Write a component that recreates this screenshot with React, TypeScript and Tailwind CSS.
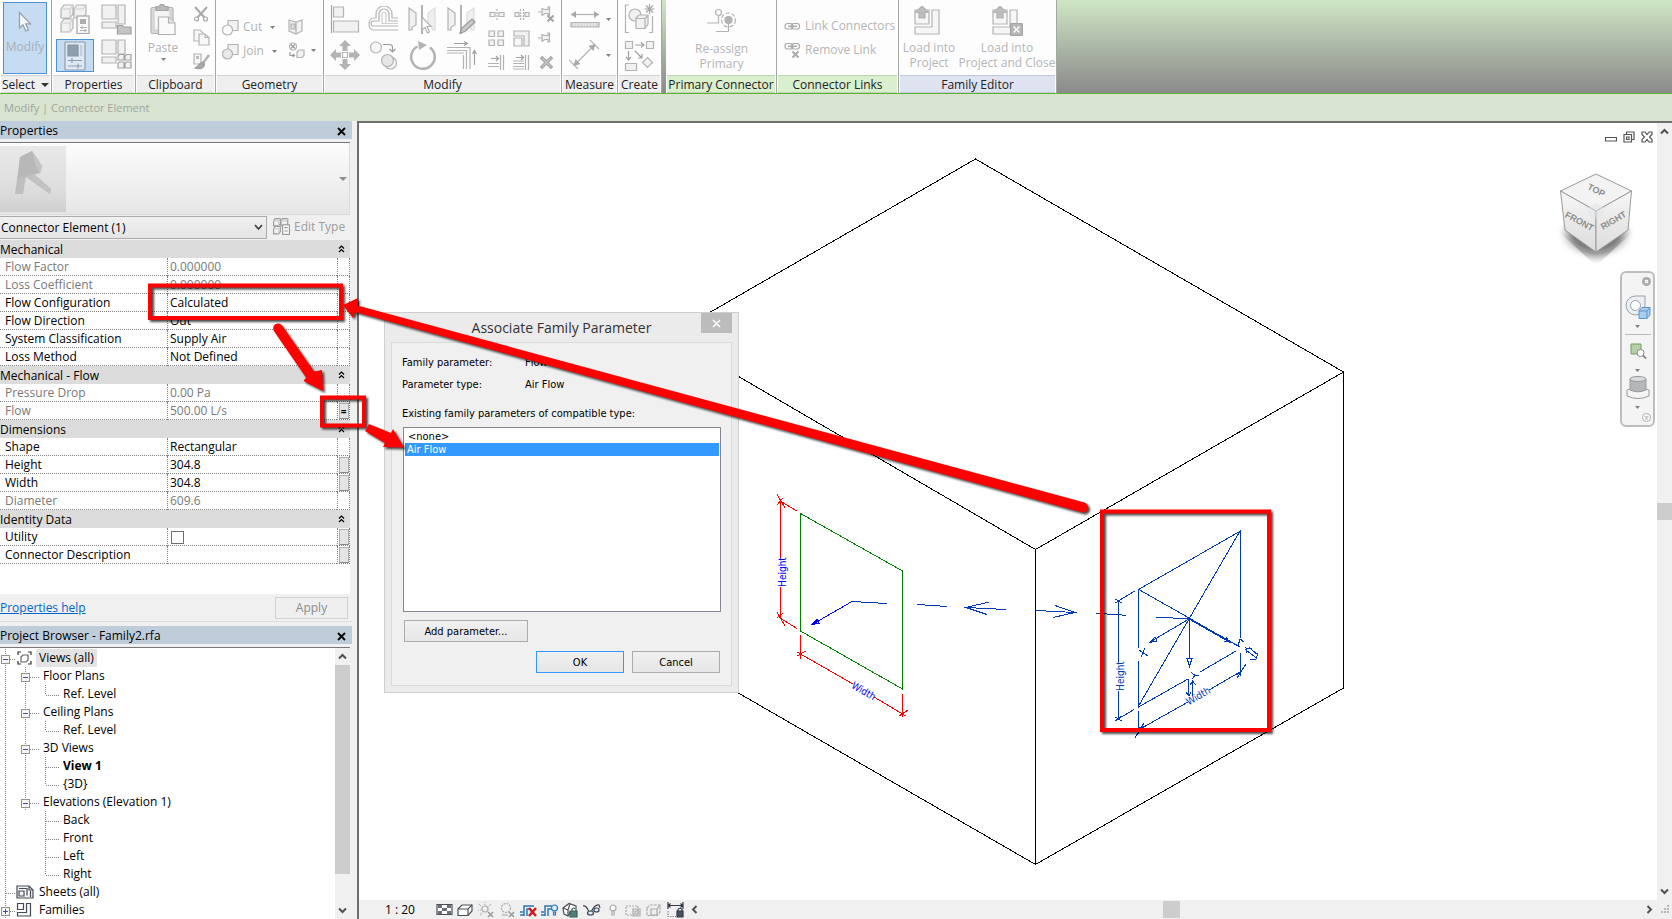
import React from "react";
import type { ReactNode } from "react";

/* ---------- shared drawing helpers ---------- */

type ArtProps = { w: number; h: number; children: ReactNode; stroke?: string; fill?: string };

function Art({ w, h, children, stroke = "#b3b3b3", fill = "#f1f1f1" }: ArtProps) {
  return (
    <svg
      aria-hidden="true"
      className="block shrink-0"
      width={w}
      height={h}
      viewBox={`0 0 ${w} ${h}`}
      fill={fill}
      stroke={stroke}
      strokeWidth="1.2"
    >
      {children}
    </svg>
  );
}

function Caret({ color = "#808080", size = 5 }: { color?: string; size?: number }) {
  return (
    <svg aria-hidden="true" className="block shrink-0" width={size} height={size > 5 ? 4 : 3} viewBox="0 0 6 3" preserveAspectRatio="none">
      <path d="M0 0h6L3 3z" fill={color} />
    </svg>
  );
}

type IconButtonProps = { label: string; className?: string; children: ReactNode };

function IconButton({ label, className = "", children }: IconButtonProps) {
  return (
    <button type="button" aria-label={label} title={label} className={`flex items-center justify-center ${className}`}>
      {children}
    </button>
  );
}

/* ---------- ribbon icons ---------- */

const CursorIcon = () => (
  <Art w={14} h={22} fill="#f4f8fc" stroke="#98a0a8">
    <path d="M1.500 1.500v15.500l3.500-3.300 2.700 6.300 2.600-1.100-2.600-6.100h4.800z" />
  </Art>
);

const Cubes = () => (
  <>
    <path d="M1 5l3-4h9v9l-3 4H1zM14 5l3-4h9v9l-3 4h-9zM1 19l3-4h9v9l-3 4H1z" />
    <path d="M1 5h9l3-4M10 5v9M14 5h9l3-4M1 19h9l3-4M10 19v9" fill="none" stroke="#cfcfcf" />
  </>
);

const TypePropertiesIcon = () => (
  <Art w={30} h={30}>
    <Cubes />
    <rect x="17" y="12" width="12" height="17.500" fill="#fafafa" stroke="#a6a6a6" />
    <rect x="20" y="15" width="6" height="5" fill="#aeaeae" stroke="none" />
    <path d="M20 23.500h7M20 26.500h7M22 22v3M25 25v3" fill="none" />
  </Art>
);

const FamilyCategoryIcon = () => (
  <Art w={31} h={31}>
    <path d="M1 1h14v14H1zM17 1h7v19h-7zM1 18h14v6H1z" />
    <path d="M16.500 21.500h5l1 1.500h7.500v7h-13.500z" fill="#c4c4c4" stroke="#9f9f9f" />
  </Art>
);

const PropertiesIcon = () => (
  <Art w={22} h={30} stroke="#8d9bab" fill="#dfe9f3">
    <rect x="1" y="1" width="20" height="28" rx="1" />
    <path d="M4 4h10v11H4z" fill="#8f9ead" stroke="#8494a5" />
    <path d="M16 4h2.500v11H16z" fill="#c3d0dc" stroke="none" />
    <path d="M4 19.500h14M4 25h14M8 17v5M14 22.500v5" fill="none" />
  </Art>
);

const FamilyTypesIcon = () => (
  <Art w={31} h={31}>
    <path d="M1 1h14v14H1zM17 1h7v14h-7zM1 18h14v6H1z" />
    <path d="M17 17l1.500-1.500h4.500v5.500h-6zM24 17l1.500-1.500h4.500v5.500h-6zM17 24.500l1.500-1.500h4.500v6h-6zM24 24.500l1.500-1.500h4.500v6h-6z" stroke="#a3a3a3" />
  </Art>
);

const PasteIcon = () => (
  <Art w={27} h={32}>
    <rect x="1" y="3.500" width="22" height="26" rx="1.500" fill="#d9d9d9" stroke="#b5b5b5" />
    <path d="M4 6h16v20H4z" fill="#f4f4f4" stroke="#cfcfcf" />
    <path d="M6 2.500h3l1.500-2h3l1.500 2h3v4H6z" fill="#b9b9b9" stroke="#a5a5a5" />
    <path d="M8.500 13h10l6.500 6v11.500H8.500z" fill="#fafafa" stroke="#b0b0b0" />
    <path d="M18.500 13v6h6.500" fill="#e3e3e3" />
  </Art>
);

const ScissorsIcon = () => (
  <Art w={16} h={16} fill="none" stroke="#a8a8a8">
    <path d="M2 1l9.500 10.500M14 1L4.500 11.500" strokeWidth="2" />
    <circle cx="3.500" cy="13" r="2" />
    <circle cx="12.500" cy="13" r="2" />
  </Art>
);

const CopyIcon = () => (
  <Art w={17} h={17} fill="#f7f7f7">
    <path d="M1 1h6l3 3v8H1z" />
    <path d="M6 5h6l4 3.500V16H6z" />
    <path d="M12 5v3.500h4" fill="none" />
  </Art>
);

const MatchIcon = () => (
  <Art w={17} h={17}>
    <path d="M1 1h7v10H1z" fill="#f7f7f7" />
    <path d="M3 3h3v3H3z" fill="#bbb" stroke="none" />
    <path d="M16 2l-6 8" strokeWidth="2.500" />
    <path d="M10 9c-4 0-3 4-8 6 4 1.500 9 1 9.500-4z" fill="#a8a8a8" stroke="#9c9c9c" />
  </Art>
);

const CutGeomIcon = () => (
  <Art w={17} h={17}>
    <path d="M6 1.500h10v10H6z" />
    <circle cx="5.500" cy="11" r="5" fill="#fff" />
  </Art>
);

const JoinGeomIcon = () => (
  <Art w={17} h={17}>
    <path d="M6 1.500h10v10H6z" />
    <circle cx="5.500" cy="11" r="5" fill="#e9e9e9" />
  </Art>
);

const CopeIcon = () => (
  <Art w={15} h={17}>
    <path d="M1 2l7 2 6-2v11l-6 3-7-3z" />
    <path d="M8 4v12M3 6h4v5H3z" fill="#ddd" />
  </Art>
);

const SplitFaceIcon = () => (
  <Art w={17} h={17}>
    <circle cx="5" cy="4.500" r="3.500" fill="#fff" />
    <path d="M3 2.500l4 4M7 2.500l-4 4M2 10v3.500h4M4.500 12l2 1.500-2 1.500" fill="none" stroke="#999" />
    <path d="M9 10l2-2h5v5.500l-2 2H9z" />
  </Art>
);

const AlignIcon = () => (
  <Art w={30} h={30}>
    <path d="M1.500 1v28" stroke="#a5a5a5" />
    <path d="M3.500 3h10v10h-10zM3.500 17h25v11h-25z" />
  </Art>
);

const OffsetIcon = () => (
  <Art w={31} h={27} fill="none">
    <path d="M30 20H5.500a2.500 2.500 0 010-5H11V8a5 5 0 0110 0v7h9" />
    <path d="M30 24H5.500C-.5 24-.5 12 6 12h2V8a8 8 0 0116 0v4h6" stroke="#b8b8b8" />
    <path d="M30 17.500H14V8.500a2 2 0 014 0v9" stroke="#d0d0d0" />
  </Art>
);

const MirrorPickIcon = () => (
  <Art w={29} h={29}>
    <path d="M1 3l7 5v12l-4 2v3H1z" />
    <path d="M27 3l-7 5v12l4 2v3h3z" fill="#efefef" stroke="#dcdcdc" />
    <path d="M14 0v29" strokeWidth="2" />
    <path d="M14 12v13l3-2.500 2.500 5.500 2-1-2.500-5.500h4z" fill="#fff" />
  </Art>
);

const MirrorDrawIcon = () => (
  <Art w={29} h={29}>
    <path d="M1 3l7 5v12l-4 2v3H1z" />
    <path d="M27 3l-7 5v12l4 2v3h3z" fill="#efefef" stroke="#dcdcdc" />
    <path d="M14 0v29" strokeWidth="2" />
    <path d="M13 28l2-5 10-9 3 3-10 9.500z" fill="#c9c9c9" stroke="#999" />
  </Art>
);

const MoveIcon = () => (
  <Art w={30} h={30} fill="#b3b3b3" stroke="none">
    <path d="M15 0l6 6h-3.500v5h-5V6H9zM15 30l-6-6h3.500v-5h5v5H21zM0 15l6-6v3.500h5v5H6V21zM30 15l-6 6v-3.500h-5v-5h5V9z" />
    <path d="M12.500 12.500h5v5h-5z" fill="#fff" stroke="#b3b3b3" />
  </Art>
);

const CopyMoveIcon = () => (
  <Art w={29} h={29} fill="#f6f6f6">
    <circle cx="7" cy="6.500" r="5.500" />
    <circle cx="21.500" cy="22" r="6" />
    <circle cx="18.500" cy="19.500" r="6" fill="#e7e7e7" />
    <path d="M14 3.500h6.500q3 0 3 3V10M20.500 8l3 3 3-3" fill="none" stroke="#9a9a9a" />
  </Art>
);

const RotateIcon = () => (
  <Art w={28} h={30} fill="none">
    <path d="M8.500 6.500A11.800 11.800 0 1021 7.500" strokeWidth="2.500" />
    <path d="M9 1l9 4-8 5z" fill="#b3b3b3" stroke="none" />
  </Art>
);

const TrimIcon = () => (
  <Art w={30} h={29} fill="none">
    <path d="M7 2.500h13M17 .500l3.500 2-3.500 2" stroke="#a0a0a0" />
    <path d="M0 6.500h23V28M0 9.500h19.500V28M0 12h17M16.500 14v14" />
    <path d="M27.500 24V10M25.500 13l2-3.500 2 3.500" stroke="#a0a0a0" />
  </Art>
);

const SplitIcon = () => (
  <Art w={16} h={13}>
    <path d="M1 4.500h5v4H1zM10 4.500h5v4h-5z" />
    <path d="M8 1v11" strokeDasharray="2 1" />
  </Art>
);

const SplitGapIcon = () => (
  <Art w={16} h={13}>
    <path d="M1 4.500h4v4H1zM11 4.500h4v4h-4z" />
    <path d="M6.500 1v11M9.500 1v11" strokeDasharray="2 1" />
  </Art>
);

const UnpinIcon = () => (
  <Art w={17} h={17}>
    <path d="M0 6h4M4 2.500v7l3-2h3v2.500h1.500V1H10v2.500H7z" />
    <path d="M9.500 9.500l6 6M15.500 9.500l-6 6" stroke="#a0a0a0" strokeWidth="1.800" />
  </Art>
);

const PinIcon = () => (
  <Art w={17} h={17}>
    <path d="M0 8h4M4 4.500v7l3-2h3v2.500h1.500V3H10v2.500H7z" />
  </Art>
);

const ArrayIcon = () => (
  <Art w={17} h={17}>
    <path d="M1 1h5.500v5.500H1zM10 1h5.500v5.500H10zM1 10h5.500v5.500H1zM10 10h5.500v5.500H10z" />
  </Art>
);

const ScaleIcon = () => (
  <Art w={17} h={17}>
    <path d="M1 1h15v15h-5V6H1z" />
    <path d="M1 8h8v8H1z" fill="#f7f7f7" />
  </Art>
);

const TrimOneIcon = () => (
  <Art w={17} h={17} fill="none">
    <path d="M12.500 1v15M15.500 1v15M0 9.500h11M0 12.500h11" />
    <path d="M3 4.500h7M8 2l2.500 2.500L8 7" stroke="#a0a0a0" />
  </Art>
);

const TrimManyIcon = () => (
  <Art w={17} h={17} fill="none">
    <path d="M12.500 1v15M15.500 1v15M0 7h11M0 9.500h11M0 12.500h11M0 15h11" />
    <path d="M3 3.500h7M8 1l2.500 2.500L8 6" stroke="#a0a0a0" />
  </Art>
);

const DeleteIcon = () => (
  <Art w={15} h={15} stroke="#a4a4a4">
    <path d="M2 2l11 11M13 2L2 13" strokeWidth="3.500" />
    <path d="M3 3l9 9M12 3l-9 9" stroke="#c6c6c6" />
  </Art>
);

const MeasureIcon = () => (
  <Art w={30} h={18}>
    <path d="M1 4.500h28" />
    <path d="M1 4.500L6 1v7zM29 4.500L24 1v7z" fill="#a8a8a8" stroke="none" />
    <path d="M1 12.500h28v4.500H1z" fill="#d4d4d4" />
    <path d="M4 13v3M7 13v3M10 13v3M13 13v3M16 13v3M19 13v3M22 13v3M25 13v3" stroke="#f4f4f4" strokeWidth="1" />
  </Art>
);

const AlignedDimIcon = () => (
  <Art w={31} h={30}>
    <path d="M6 24.500L25 5.500M0 20l9 9M21 0l9 9" fill="none" />
    <path d="M4.500 26l2-7 5 5zM26.500 4l-2 7-5-5z" fill="#a8a8a8" stroke="none" />
  </Art>
);

const GroupIcon = () => (
  <Art w={31} h={30}>
    <path d="M5 1H1.500v27.500H5M25 28.500h3.500V12" fill="none" />
    <circle cx="11" cy="11" r="6" />
    <path d="M12 14l3-3h9v9l-3 4.500h-9z" />
    <path d="M12 14.500h9l3-3M21 14.500v10" fill="none" />
    <path d="M25.500 0v10M20.500 5h10M22 1.500l7 7M29 1.500l-7 7" stroke="#a6a6a6" />
  </Art>
);

const SimilarIcon = () => (
  <Art w={31} h={31}>
    <path d="M1.500 1.500h7v7h-7zM22.500 1.500h7v7h-7zM1.500 23.500h11v7h-11zM23.500 17.500l5 5-5 5-5-5z" />
    <path d="M11 5h9M17 2.500L20 5l-3 2.500M4.500 11v9M2 17l2.500 3L7 17M11 11l7 7M18 14v4h-4" fill="none" stroke="#a0a0a0" />
  </Art>
);

const ReassignIcon = () => (
  <Art w={30} h={25} fill="none">
    <path d="M0 15h11.500V8M9 23.500h12.500V13" />
    <circle cx="11.500" cy="4.500" r="3" />
    <circle cx="21.500" cy="12" r="3.500" fill="#b3b3b3" />
    <circle cx="21.500" cy="12" r="7" strokeDasharray="4 2" />
  </Art>
);

const LinkIcon = () => (
  <Art w={17} h={9} fill="none" stroke="#ababab">
    <rect x="1" y="1.500" width="8" height="5.500" rx="2.500" />
    <rect x="7.500" y="1.500" width="8" height="5.500" rx="2.500" />
    <path d="M4 4.300h9" strokeWidth="1.500" />
  </Art>
);

const UnlinkIcon = () => (
  <Art w={17} h={17} fill="none" stroke="#ababab">
    <rect x="1" y="1.500" width="8" height="5.500" rx="2.500" />
    <rect x="7.500" y="1.500" width="8" height="5.500" rx="2.500" />
    <path d="M4 4.300h9" strokeWidth="1.500" />
    <path d="M8.500 9.500l6 6M14.500 9.500l-6 6" strokeWidth="2" />
  </Art>
);

const LoadIcon = () => (
  <Art w={31} h={30}>
    <path d="M1 4h14v14H1zM18 4h7v24H1v-7h17z" fill="#f6f6f6" />
    <path d="M8 0l6.500 6.500H11V12H5V6.500H1.500z" fill="#bdbdbd" />
  </Art>
);

const LoadCloseIcon = () => (
  <Art w={31} h={30}>
    <path d="M1 4h14v14H1zM18 4h7v24H1v-7h17z" fill="#f6f6f6" />
    <path d="M8 0l6.500 6.500H11V12H5V6.500H1.500z" fill="#bdbdbd" />
    <rect x="18.500" y="17.500" width="12" height="12" rx="1" fill="#b5b5b5" stroke="#a5a5a5" />
    <path d="M21.500 20.500l6 6M27.500 20.500l-6 6" stroke="#fff" strokeWidth="1.500" />
  </Art>
);

/* ---------- ribbon ---------- */

type PanelProps = { title: string; className: string; tone?: string; caret?: boolean; children: ReactNode };

function Panel({ title, className, tone = "bg-[#efefef] border-[#d2d2d2]", caret, children }: PanelProps) {
  return (
    <section aria-label={title} className={`flex shrink-0 flex-col border-r border-[#a4a8a2] bg-[#fdfdfd] pl-px ${className}`}>
      <div className="flex h-[75px]">{children}</div>
      <div className={`mr-px flex h-[18px] items-center justify-center border-y pt-px whitespace-nowrap ${caret ? "gap-1.5" : ""} ${tone}`}>
        <span>{title}</span>
        {caret && <Caret color="#333" size={8} />}
      </div>
    </section>
  );
}

function Ribbon() {
  return (
    <header className="flex h-[93px] shrink-0 bg-linear-to-b from-[#cfe6c4] to-[#8a8a8a] text-xs leading-4 text-[#222]">
      <Panel title="Select" caret className="w-13">
        <button type="button" className="mt-0.5 ml-0.5 flex h-[72px] w-11 flex-col items-center border border-[#4c92d4] bg-[#c5dcf2] pt-2 text-[#a7afb8]">
          <CursorIcon />
          <span className="mt-1.5">Modify</span>
        </button>
      </Panel>
      <Panel title="Properties" className="w-21">
        <div className="grid grid-cols-[38px_36px] grid-rows-[34px_36px] gap-x-1 pt-0.5 pl-[3px]">
          <IconButton label="Type Properties"><TypePropertiesIcon /></IconButton>
          <IconButton label="Family Category and Parameters"><FamilyCategoryIcon /></IconButton>
          <IconButton label="Properties" className="mt-[3px] border border-[#4c92d4] bg-[#c5dcf2]"><PropertiesIcon /></IconButton>
          <IconButton label="Family Types"><FamilyTypesIcon /></IconButton>
        </div>
      </Panel>
      <Panel title="Clipboard" className="w-20">
        <button type="button" className="ml-1.5 flex w-10 flex-col items-center pt-1 text-[#b2b2b2]">
          <PasteIcon />
          <span className="mt-1 mb-0.5">Paste</span>
          <Caret />
        </button>
        <div className="ml-2 flex flex-col justify-between py-1">
          <IconButton label="Cut" className="h-5 w-5"><ScissorsIcon /></IconButton>
          <IconButton label="Copy" className="h-5 w-5"><CopyIcon /></IconButton>
          <IconButton label="Match Type Properties" className="h-5 w-5"><MatchIcon /></IconButton>
        </div>
      </Panel>
      <Panel title="Geometry" className="w-27">
        <div className="flex w-16 flex-col gap-2 pt-[19px] pl-[5px] text-[#b2b2b2]">
          <button type="button" className="flex h-4 items-center gap-1"><CutGeomIcon />Cut<span className="pl-1"><Caret /></span></button>
          <button type="button" className="flex h-4 items-center gap-1"><JoinGeomIcon />Join<span className="pl-1"><Caret /></span></button>
        </div>
        <div className="flex flex-col items-start gap-2 pt-[18px] pl-[7px]">
          <IconButton label="Cope" className="h-4"><CopeIcon /></IconButton>
          <IconButton label="Split Face" className="h-4 gap-1.5"><SplitFaceIcon /><Caret /></IconButton>
        </div>
      </Panel>
      <Panel title="Modify" className="w-[238px]">
        <div className="grid grid-cols-[39px_39px_39px_39px] grid-rows-[36px_36px] pt-px">
          <IconButton label="Align"><AlignIcon /></IconButton>
          <IconButton label="Offset"><OffsetIcon /></IconButton>
          <IconButton label="Mirror - Pick Axis"><MirrorPickIcon /></IconButton>
          <IconButton label="Mirror - Draw Axis"><MirrorDrawIcon /></IconButton>
          <IconButton label="Move"><MoveIcon /></IconButton>
          <IconButton label="Copy"><CopyMoveIcon /></IconButton>
          <IconButton label="Rotate"><RotateIcon /></IconButton>
          <IconButton label="Trim/Extend to Corner"><TrimIcon /></IconButton>
        </div>
        <div className="grid grid-cols-[25px_25px_25px] grid-rows-[24px_24px_24px] pt-0.5 pl-[3px]">
          <IconButton label="Split Element"><SplitIcon /></IconButton>
          <IconButton label="Split with Gap"><SplitGapIcon /></IconButton>
          <IconButton label="Unpin"><UnpinIcon /></IconButton>
          <IconButton label="Array"><ArrayIcon /></IconButton>
          <IconButton label="Scale"><ScaleIcon /></IconButton>
          <IconButton label="Pin"><PinIcon /></IconButton>
          <IconButton label="Trim/Extend Single Element"><TrimOneIcon /></IconButton>
          <IconButton label="Trim/Extend Multiple Elements"><TrimManyIcon /></IconButton>
          <IconButton label="Delete"><DeleteIcon /></IconButton>
        </div>
      </Panel>
      <Panel title="Measure" className="w-14">
        <div className="grid grid-rows-[36px_36px] pt-px pl-1.5">
          <IconButton label="Measure" className="gap-1.5"><MeasureIcon /><Caret /></IconButton>
          <IconButton label="Aligned Dimension" className="gap-1.5"><AlignedDimIcon /><Caret /></IconButton>
        </div>
      </Panel>
      <Panel title="Create" className="w-11">
        <div className="grid grid-rows-[36px_36px] pt-px pl-[5px]">
          <IconButton label="Create Group"><GroupIcon /></IconButton>
          <IconButton label="Create Similar"><SimilarIcon /></IconButton>
        </div>
      </Panel>
      <Panel title="Primary Connector" tone="bg-[#d9efcd] border-[#bcd2b0]" className="ml-1 w-[111px]">
        <button type="button" className="flex w-full flex-col items-center pt-2 leading-[15px] text-[#b5b5b5]">
          <ReassignIcon />
          <span className="mt-2">Re-assign<br />Primary</span>
        </button>
      </Panel>
      <Panel title="Connector Links" tone="bg-[#d9efcd] border-[#bcd2b0]" className="w-[122px]">
        <div className="flex flex-col gap-2 pt-[18px] pl-1.5 text-[#b5b5b5]">
          <button type="button" className="flex h-4 items-center gap-1 whitespace-nowrap"><LinkIcon />Link Connectors</button>
          <button type="button" className="flex h-4 items-center gap-1 whitespace-nowrap"><UnlinkIcon />Remove Link</button>
        </div>
      </Panel>
      <Panel title="Family Editor" tone="bg-[#dfe2f1] border-[#c3c6d8]" className="w-[158px]">
        <button type="button" className="flex w-[58px] flex-col items-center pt-1.5 leading-[15px] whitespace-nowrap text-[#b5b5b5]">
          <LoadIcon />
          <span className="mt-1">Load into<br />Project</span>
        </button>
        <button type="button" className="flex flex-1 flex-col items-center pt-1.5 leading-[15px] whitespace-nowrap text-[#b5b5b5]">
          <LoadCloseIcon />
          <span className="mt-1">Load into<br />Project and Close</span>
        </button>
      </Panel>
    </header>
  );
}

/* ---------- properties palette ---------- */

function PaletteTitle({ children }: { children: ReactNode }) {
  return (
    <div className="mr-[5px] flex h-[18px] shrink-0 items-center justify-between bg-[#bfcddb] pt-0.5 pr-[5px]">
      <h2 className="whitespace-nowrap">{children}</h2>
      <IconButton label="Close" className="h-3 w-3">
        <svg aria-hidden="true" width="9" height="9" viewBox="0 0 9 9" stroke="#000" strokeWidth="1.800"><path d="M1 1l7 7M8 1L1 8" /></svg>
      </IconButton>
    </div>
  );
}

type Prop = { name: string; value?: string; dim?: boolean; assoc?: "none" | "empty" | "equals"; check?: boolean };
type Group = { title: string; rows: Prop[] };

const groups: Group[] = [
  {
    title: "Mechanical",
    rows: [
      { name: "Flow Factor", value: "0.000000", dim: true },
      { name: "Loss Coefficient", value: "0.000000", dim: true },
      { name: "Flow Configuration", value: "Calculated" },
      { name: "Flow Direction", value: "Out" },
      { name: "System Classification", value: "Supply Air" },
      { name: "Loss Method", value: "Not Defined" },
    ],
  },
  {
    title: "Mechanical - Flow",
    rows: [
      { name: "Pressure Drop", value: "0.00 Pa", dim: true },
      { name: "Flow", value: "500.00 L/s", dim: true, assoc: "equals" },
    ],
  },
  {
    title: "Dimensions",
    rows: [
      { name: "Shape", value: "Rectangular" },
      { name: "Height", value: "304.8", assoc: "empty" },
      { name: "Width", value: "304.8", assoc: "empty" },
      { name: "Diameter", value: "609.6", dim: true },
    ],
  },
  {
    title: "Identity Data",
    rows: [
      { name: "Utility", check: true, assoc: "empty" },
      { name: "Connector Description", assoc: "empty" },
    ],
  },
];

function PropertyRow({ row }: { row: Prop }) {
  const tone = row.dim ? "text-[#787878]" : "text-black";
  return (
    <tr className={`h-[18px] ${tone}`}>
      <th scope="row" className="border-b border-dotted border-[#808080] p-0 pl-[5px] text-left font-normal">
        {row.check ? <label htmlFor="utility">{row.name}</label> : row.name}
      </th>
      <td className="border-b border-l border-dotted border-[#808080] p-0 pl-0.5">
        {row.check ? (
          <input id="utility" type="checkbox" className="mt-0.5 ml-px block h-[13px] w-[13px] appearance-none border border-[#707070] bg-white" />
        ) : (
          row.value
        )}
      </td>
      <td className="border-x border-b border-dotted border-[#808080] p-0">
        {row.assoc && (
          <button
            type="button"
            aria-label={`Associate ${row.name}`}
            className="mx-auto flex h-4 w-2.5 items-center justify-center border border-[#adadad] border-b-[#8a8a8a] bg-[#e4e4e4] text-[10px] leading-[14px] font-bold text-black"
          >
            {row.assoc === "equals" ? "=" : ""}
          </button>
        )}
      </td>
    </tr>
  );
}

function PropertiesPalette() {
  return (
    <section aria-label="Properties" className="flex shrink-0 flex-col">
      <PaletteTitle>Properties</PaletteTitle>
      <div className="mt-[3px] mr-[7px] border-t border-[#777]">
        <div className="flex h-[72px] items-center justify-between border-r border-b border-[#dadada] bg-linear-to-b from-[#fcfcfc] to-[#e6e6e6] pr-0.5">
          <svg aria-hidden="true" className="block" width="66" height="66" viewBox="0 0 66 66">
            <defs>
              <linearGradient id="thumb" x1="0" y1="0" x2="0" y2="1">
                <stop offset="0" stopColor="#e9e9e9" />
                <stop offset="0.700" stopColor="#dcdcdc" />
                <stop offset="1" stopColor="#cfcfcf" />
              </linearGradient>
            </defs>
            <rect width="66" height="66" fill="url(#thumb)" />
            <path d="M20 11l12-6 10 15-2 7-6 1 17 15-1 5-24-17-3 17h-8z" fill="#bebebe" />
            <path d="M32 5l10 15-2 7-22 5 2-21z" fill="#b8b8b8" />
            <path d="M32 5l10 15-2 7-5-9z" fill="#c4c4c4" />
            <path d="M34 28l17 15-1 5-24-17z" fill="#c2c2c2" />
          </svg>
          <IconButton label="Change type" className="h-4 w-2"><Caret size={8} color="#909090" /></IconButton>
        </div>
        <div className="flex h-[25px] items-center">
          <div className="relative h-[23px] w-[267px] shrink-0">
            <select aria-label="Type filter" className="h-full w-full appearance-none border border-l-0 border-[#ababab] bg-linear-to-b from-[#f2f2f2] to-[#e3e3e3] pt-px pl-px">
              <option>Connector Element (1)</option>
            </select>
            <svg aria-hidden="true" className="pointer-events-none absolute top-2 right-1" width="9" height="7" viewBox="0 0 9 7" fill="none" stroke="#444" strokeWidth="1.800"><path d="M1 1l3.500 4L8 1" /></svg>
          </div>
          <button type="button" className="mb-0.5 ml-1.5 flex items-center gap-1 whitespace-nowrap text-[#9c9c9c]">
            <svg aria-hidden="true" width="17" height="17" viewBox="0 0 30 30" fill="#f1f1f1" stroke="#999" strokeWidth="2">
              <Cubes />
              <rect x="17" y="12" width="12" height="17" fill="#fafafa" stroke="#999" />
              <path d="M20 17h6M20 23h6" />
            </svg>
            Edit Type
          </button>
        </div>
      </div>
      <div className="mr-[7px] bg-white pb-[30px]">
        <table className="w-full table-fixed border-separate border-spacing-0 leading-4">
          <colgroup>
            <col />
            <col className="w-[170px]" />
            <col className="w-[13px]" />
          </colgroup>
          {groups.map((g) => (
            <tbody key={g.title}>
              <tr className="h-[18px] bg-[#dcdcdc]">
                <th scope="colgroup" colSpan={2} className="p-0 pt-px text-left font-normal">{g.title}</th>
                <td className="p-0">
                  <IconButton label={`Collapse ${g.title}`} className="-ml-1 h-4 w-4">
                    <svg aria-hidden="true" width="7" height="8" viewBox="0 0 7 8" fill="none" stroke="#000" strokeWidth="1.200"><path d="M1 3.500l2.500-2.500L6 3.500M1 7l2.500-2.500L6 7" /></svg>
                  </IconButton>
                </td>
              </tr>
              {g.rows.map((r) => <PropertyRow key={r.name} row={r} />)}
            </tbody>
          ))}
        </table>
      </div>
      <div className="mr-[5px] mb-1 flex h-7 items-center justify-between border-b border-[#dcdcdc] pr-1">
        <a href="#help" className="text-[#0066cc] underline">Properties help</a>
        <button type="button" className="h-[22px] w-[73px] border border-[#d0d0d0] bg-[#efefef] pt-px text-[#8c8c8c]">Apply</button>
      </div>
    </section>
  );
}

/* ---------- project browser ---------- */

type Guide = "" | "line" | "start" | "minus" | "plus" | "tee" | "end" | "stub";

function GuideCell({ kind, narrow }: { kind: Guide; narrow?: boolean }) {
  const full = kind === "line" || kind === "tee" || kind === "minus" || kind === "plus";
  return (
    <svg aria-hidden="true" className="block shrink-0" width={narrow ? 16 : 20} height="18" viewBox={narrow ? "0 0 16 18" : "0 0 20 18"} shapeRendering="crispEdges" fill="none" stroke="#808080" strokeDasharray="1 1">
      {full && <path d="M5.500 0V18" />}
      {kind === "end" && <path d="M5.500 0V10" />}
      {kind === "start" && <path d="M5.500 10V18" />}
      {kind !== "" && kind !== "line" && kind !== "start" && <path d="M5.500 10.500H20" />}
      {(kind === "minus" || kind === "plus") && (
        <g strokeDasharray="none">
          <rect x="1.500" y="6.500" width="8" height="8" fill="#f6f6f6" stroke="#919191" />
          <path d={kind === "plus" ? "M3 10.500h5M5.500 8v5" : "M3 10.500h5"} stroke="#3c50b4" />
        </g>
      )}
    </svg>
  );
}

const ViewsIcon = () => (
  <Art w={20} h={16} fill="none" stroke="#333">
    <path d="M2 5V2h3M12 2h3v3M2 11v3h3M12 14h3v-3" />
    <path d="M5 7l2-2h5v5l-2 2H5z" stroke="#666" />
  </Art>
);

const SheetsIcon = () => (
  <Art w={20} h={16} fill="#f4f4f4" stroke="#444b55">
    <path d="M1 2h12l4 4v8H1z" />
    <path d="M3 4.500h8v7M3 7h5v5H3zM13 2v4h4M14.500 7v6" fill="none" />
  </Art>
);

const FamiliesIcon = () => (
  <Art w={20} h={16} fill="#f8f8f8" stroke="#444b55">
    <path d="M1.500 1.500h6v6h-6zM10.500 1.500h4v12.500h-13v-3.500h9z" />
  </Art>
);

type Node = { label: string; guides: Guide[]; icon?: ReactNode; bold?: boolean; selected?: boolean };

const nodes: Node[] = [
  { label: "Views (all)", guides: ["minus"], icon: <ViewsIcon />, selected: true },
  { label: "Floor Plans", guides: ["line", "minus"] },
  { label: "Ref. Level", guides: ["line", "line", "end"] },
  { label: "Ceiling Plans", guides: ["line", "minus"] },
  { label: "Ref. Level", guides: ["line", "line", "end"] },
  { label: "3D Views", guides: ["line", "minus"] },
  { label: "View 1", guides: ["line", "line", "tee"], bold: true },
  { label: "{3D}", guides: ["line", "line", "end"] },
  { label: "Elevations (Elevation 1)", guides: ["line", "minus"] },
  { label: "Back", guides: ["line", "", "tee"] },
  { label: "Front", guides: ["line", "", "tee"] },
  { label: "Left", guides: ["line", "", "tee"] },
  { label: "Right", guides: ["line", "", "end"] },
  { label: "Sheets (all)", guides: ["tee"], icon: <SheetsIcon /> },
  { label: "Families", guides: ["plus"], icon: <FamiliesIcon /> },
];

function Chevron({ d }: { d: string }) {
  return (
    <svg aria-hidden="true" width="9" height="9" viewBox="0 0 9 9" fill="none" stroke="#505050" strokeWidth="2"><path d={d} /></svg>
  );
}

const UP = "M1 6.500L4.500 3 8 6.500";
const DOWN = "M1 2.500L4.500 6 8 2.500";
const LEFT = "M6.500 1L3 4.500 6.500 8";
const RIGHT = "M2.500 1L6 4.500 2.500 8";

function ProjectBrowser() {
  return (
    <section aria-label="Project Browser" className="flex min-h-0 flex-1 flex-col">
      <PaletteTitle>Project Browser - Family2.rfa</PaletteTitle>
      <div className="mt-[3px] mr-[7px] flex min-h-0 flex-1 border-t border-[#777] bg-white">
        <ul className="min-w-0 flex-1 overflow-hidden pt-px">
          {nodes.map((n, i) => (
            <li key={i} className="flex h-[18px] items-center">
              {n.guides.map((g, j) => <GuideCell key={j} kind={g} narrow={!!n.icon} />)}
              {n.icon}
              <span className={`px-[3px] leading-[18px] ${n.bold ? "font-bold" : ""} ${n.selected ? "bg-[#e3e3e3]" : ""}`}>{n.label}</span>
            </li>
          ))}
        </ul>
        <div className="flex w-[15px] flex-col bg-[#f0f0f0]">
          <IconButton label="Scroll up" className="h-[17px]"><Chevron d={UP} /></IconButton>
          <div className="flex-1"><div className="h-[88%] bg-[#cdcdcd]" /></div>
          <IconButton label="Scroll down" className="h-[17px]"><Chevron d={DOWN} /></IconButton>
        </div>
      </div>
    </section>
  );
}

/* ---------- model view ---------- */

function ModelDrawing() {
  return (
    <svg aria-label="3D view of the family" role="img" className="block h-full w-full font-['DejaVu_Sans_Condensed','DejaVu_Sans',sans-serif] text-[10px]">
      <g transform="translate(-359 -122)" fill="none" shapeRendering="crispEdges">
        <g stroke="#000">
          <path d="M975.500 158L669 335V652L1035.500 863.500 1343.500 687V371z" />
          <path d="M669 335L1035.500 548.500 1343.500 371M1035.500 548V863" />
        </g>
        <path d="M800.500 512.500L902.500 570V688L800.500 630z" stroke="#008000" />
        <g stroke="#f00">
          <path d="M780.500 498V557M780.500 586V618M780 500L797 510M780 617L797 627.500M777 493.500L785 507M777 504L783 497M777 611.500L785 625M777 617L783 612" />
          <path d="M800.500 634V658M902.500 693V716M800.500 653L853 683M874 696L902.500 713M797 655L806 650M797 651L804 655M899 711L906 715M899 715L908 709" />
        </g>
        <g stroke="#00f">
          <path d="M852 600.500L813 623M812 623.500L817 618.500 819 622.500z" />
        </g>
        <g stroke="#0039b8">
          <path d="M852 600.500L887 602.500M917 603.500L947 605.500M1006 608.500L966 606.500M989 601L966 606.500 987 613.500M1036 609.500L1075 611.500M1055 604.500L1075 611.500 1053 616.500" />
          <path d="M1138.500 647V588.500L1240.500 530V637M1138.500 660V706L1188 678M1200 671L1236 650M1240 530L1138 706M1138 588L1240 646" />
          <path d="M1156 616.500L1189 617.500M1189 618L1231 642M1224 640.500L1230 641 1226 636.500M1189 618L1150 641M1149.500 641.500L1155 636 1157 640z" />
          <path d="M1189.500 618V657M1187 657.500H1192L1189.500 665zM1096 612.500L1118 613.500 1126 614.500" />
          <path d="M1118.500 600V661M1118.500 690V718M1118 600L1135 590M1118 718L1134 708.500M1115 598L1122 602M1115 602L1122 598M1115 716L1122 720M1115 720L1122 715" />
          <path d="M1141 727.500L1188 701M1209 689L1240 671M1138.500 710V733M1135 737L1144 722M1139 727L1146 725M1240.500 652V675M1237 677L1246 663M1237 674L1242 670" />
          <path d="M1188.500 678V694M1186 691L1189 695 1191 691M1192.500 695V680M1190 684L1192.500 680 1196 684" />
          <path d="M1245 648.500L1256 656.500M1252 648L1246 647 1247 652M1249 646.500L1258 654M1258 652L1256 658 1250 658" />
          <path d="M1139 649L1148 655M1141 656L1145 647M1234 643L1238 645 1240 638 1244 641" />
          <path d="M1191 671L1195 674.500 1192 678M1195 674.500H1199" />
        </g>
        <g stroke="none" textAnchor="middle" fill="#00f">
          <text transform="translate(786 571) rotate(-90)">Height</text>
          <text transform="translate(862 693) rotate(30)">Width</text>
          <g fill="#0039b8">
            <text transform="translate(1124 675) rotate(-90)">Height</text>
            <text transform="translate(1200 698) rotate(-30)">Width</text>
          </g>
        </g>
      </g>
    </svg>
  );
}

function ViewCube() {
  return (
    <svg aria-label="View cube" role="img" className="absolute top-[41px] right-5 font-['Liberation_Sans',sans-serif] font-bold" width="84" height="104" viewBox="0 0 84 104">
      <defs>
        <radialGradient id="cubeShadow">
          <stop offset="0.550" stopColor="#7d7d7d" stopOpacity="0.900" />
          <stop offset="1" stopColor="#fff" stopOpacity="0" />
        </radialGradient>
        <linearGradient id="cubeFace" x1="0" y1="0" x2="0" y2="1">
          <stop offset="0" stopColor="#f6f6f6" />
          <stop offset="1" stopColor="#dcdcdc" />
        </linearGradient>
      </defs>
      <path d="M43 46L84 64 43 102 2 64z" fill="url(#cubeShadow)" />
      <ellipse cx="43" cy="70" rx="40" ry="27" fill="url(#cubeShadow)" />
      <g stroke="#9a9a9a">
        <path d="M43 10L78.500 27 43 47 7.500 27z" fill="#f3f3f3" />
        <path d="M7.500 27L43 47V88L12 66z" fill="url(#cubeFace)" />
        <path d="M78.500 27L43 47V88L75 66z" fill="url(#cubeFace)" />
      </g>
      <path d="M36 43l7-4 7 4v8l-7 4-7-4z" fill="#dfe3e8" opacity="0.500" />
      <g fill="#8e8e8e" textAnchor="middle">
        <text transform="translate(42 29) rotate(27)" fontSize="9">TOP</text>
        <text transform="translate(25 60) rotate(28)" fontSize="9">FRONT</text>
        <text transform="translate(62 59) rotate(-30)" fontSize="9">RIGHT</text>
      </g>
    </svg>
  );
}

function NavigationBar() {
  return (
    <nav aria-label="Navigation" className="absolute top-[148px] right-0.5 flex h-[156px] w-[35px] flex-col items-center rounded-md border-2 border-[#bdbdbd] bg-[#f4f4f4] py-0.5">
      <IconButton label="Close navigation bar" className="mb-2 h-3 self-end pr-0.5">
        <svg aria-hidden="true" width="9" height="9" viewBox="0 0 9 9"><circle cx="4.500" cy="4.500" r="4.500" fill="#ababab" /><path d="M3 3l3 3M6 3L3 6" stroke="#fff" strokeWidth="1.200" /></svg>
      </IconButton>
      <IconButton label="Steering wheel" className="h-6">
        <svg aria-hidden="true" width="26" height="26" viewBox="0 0 26 26" fill="#eceff2" stroke="#9aa1a8">
          <path d="M11 2h9v9a9.500 9.500 0 11-9-9z" />
          <circle cx="10.500" cy="11.500" r="5" fill="#fafafa" />
          <path d="M14 17l3-3.500h8v7.500l-3 3.500h-8z" fill="#a9cdf0" stroke="#5f93c7" />
          <path d="M14 17h8l3-3.500M22 17v7.500" fill="none" stroke="#5f93c7" />
        </svg>
      </IconButton>
      <span className="my-1.5"><Caret /></span>
      <hr className="w-[26px] border-[#bdbdbd]" />
      <IconButton label="Zoom" className="mt-1.5 h-5">
        <svg aria-hidden="true" width="18" height="18" viewBox="0 0 18 18">
          <path d="M2 2h10v10H2z" fill="#b5cfaa" stroke="#6fa060" />
          <circle cx="11.500" cy="11" r="3.500" fill="#fff" stroke="#888" />
          <path d="M14 13.500l3 3" stroke="#888" strokeWidth="1.800" />
        </svg>
      </IconButton>
      <span className="mt-2 mb-1"><Caret /></span>
      <IconButton label="3D mouse" className="h-6">
        <svg aria-hidden="true" width="26" height="26" viewBox="0 0 26 26" stroke="#9a9a9a">
          <path d="M2 15q11-5 22 0v6q-11 5-22 0z" fill="#f4f4f4" />
          <path d="M5 4v11q8 3.500 16 0V4z" fill="#b4b7ba" />
          <ellipse cx="13" cy="4" rx="8" ry="2.500" fill="#d9dbdd" />
        </svg>
      </IconButton>
      <span className="mt-1.5"><Caret /></span>
      <IconButton label="Navigation options" className="mt-auto h-3 self-end pr-0.5">
        <svg aria-hidden="true" width="9" height="9" viewBox="0 0 9 9"><circle cx="4.500" cy="4.500" r="4" fill="#fff" stroke="#ababab" /><path d="M2.500 4h4M3.500 6h2" stroke="#999" /></svg>
      </IconButton>
    </nav>
  );
}

function WindowButtons() {
  return (
    <div className="absolute top-2 right-1 flex items-center gap-1.5">
      <IconButton label="Minimize"><Art w={12} h={12} fill="#fff" stroke="#555"><path d="M.500 6.500h11v3.500H.500z" /></Art></IconButton>
      <IconButton label="Restore"><Art w={12} h={12} fill="#fff" stroke="#555"><path d="M3.500 1h7.500v7.500h-7.500z" /><path d="M1 3.500h7.500v7.500H1zM3.500 6h2.500v2.500H3.500z" /></Art></IconButton>
      <IconButton label="Close"><Art w={12} h={12} fill="#fff" stroke="#555"><path d="M1 1h3l2 2.500L8 1h3v2.500L8.500 6 11 8.500V11H8L6 8.500 4 11H1V8.500L3.500 6 1 3.500z" /></Art></IconButton>
    </div>
  );
}

const viewTools: { label: string; art: ReactNode }[] = [
  { label: "Detail Level", art: <Art w={17} h={16} fill="#fff" stroke="#4a4f57"><path d="M1 2.500h15v10H1z" /><path d="M2 3h4v3H2zM11 3h4v3h-4zM6 6h5v3H6zM2 9h4v3H2zM11 9h4v3h-4z" fill="#6a7077" stroke="none" /></Art> },
  { label: "Visual Style", art: <Art w={17} h={16} fill="#fff" stroke="#4a4f57"><path d="M1 7l4-4h10v6l-4 4.500H1z" /><path d="M1 7h10l4-4M11 7v6.500" fill="none" /></Art> },
  { label: "Sun Path Off", art: <Art w={17} h={16} fill="none" stroke="#aaa"><circle cx="7" cy="7" r="3" /><path d="M7 0v3M1 2l3 3M0 8h3M13 2l-3 3M2 13l3-3" strokeDasharray="1 1" /><path d="M10 10l5 5M15 10l-5 5" stroke="#999" strokeWidth="1.500" /></Art> },
  { label: "Shadows Off", art: <Art w={17} h={16} fill="none" stroke="#aaa"><circle cx="7" cy="6" r="4.500" strokeDasharray="2 1" /><path d="M3 13h6" /><path d="M10 10l5 5M15 10l-5 5" stroke="#999" strokeWidth="1.500" /></Art> },
  { label: "Crop View Off", art: <Art w={18} h={16} fill="none" stroke="#2c76b8"><path d="M0 10h3M4 14V4h10M7 14V7h3M0 13h4" strokeWidth="1.500" /><path d="M9 6l7 8M16 6l-7 8" stroke="#d01818" strokeWidth="2.500" /></Art> },
  { label: "Show Crop Region", art: <Art w={18} h={16} fill="none" stroke="#2c76b8"><path d="M0 10h3M4 14V4h7M7 14V7h3M0 13h4" strokeWidth="1.500" /><circle cx="13.500" cy="6" r="3" fill="#dcecfa" /><path d="M12.500 10h2v3h-2z" fill="#dcecfa" /></Art> },
  { label: "Unlocked 3D View", art: <Art w={17} h={16} fill="#fff" stroke="#4a4f57"><path d="M1 6l6-4.500L14 4v6H8l-2 4-4-2z" /><path d="M1 6l5 2 2-6M6 8v6" fill="none" /><path d="M8 9h7v6H8z" fill="#4f7f76" stroke="#3b5f58" /><path d="M10 9V7q1.500-2 3 0" fill="none" stroke="#3b5f58" /></Art> },
  { label: "Temporary Hide", art: <Art w={18} h={16} fill="#dcecfa" stroke="#3c444f"><path d="M0 4q3-1 5 4l2 3M8 10q4-8 8-7l1 3" fill="none" /><ellipse cx="7.500" cy="11" rx="3" ry="2" /><ellipse cx="13.500" cy="8" rx="2.500" ry="2" /></Art> },
  { label: "Reveal Hidden Elements", art: <Art w={12} h={16} fill="#f7f7f7" stroke="#aaa"><circle cx="6" cy="6" r="3" /><path d="M5 9h2v4H5z" /></Art> },
  { label: "Worksharing Display", art: <Art w={17} h={16} fill="none" stroke="#aaa"><path d="M1 4h12v9H1z" strokeDasharray="2 1" /><path d="M8 7h7v7H8zM10 9h3v3h-3z" /></Art> },
  { label: "Displacement Set", art: <Art w={17} h={16} fill="none" stroke="#aaa"><path d="M1 6l3-3h10v7l-3 3.500H1z" strokeDasharray="3 1" /><path d="M5 7h6v6H5zM11 7l3-4" /></Art> },
  { label: "Reveal Constraints", art: <Art w={18} h={16} fill="none" stroke="#333b45"><path d="M1 0v7M16 0v7M1 3.500h15M3.500 1.500l-2 2 2 2M13.500 1.500l2 2-2 2" /><path d="M1 9v5.500h8" strokeDasharray="1.500 1" stroke="#888" /><path d="M10 9h6v6h-6z" fill="#4a525c" /><path d="M11 9V7.500q2-2.500 4 0V9" /></Art> },
];

function ModelView() {
  return (
    <main className="flex min-w-0 flex-1 flex-col border-t-2 border-l-2 border-[#6e6e6e] bg-[#f0f0f0]">
      <div className="flex min-h-0 flex-1">
        <div className="relative min-w-0 flex-1 overflow-hidden bg-white">
          <ModelDrawing />
          <WindowButtons />
          <ViewCube />
          <NavigationBar />
        </div>
        <div className="flex w-[15px] flex-col bg-[#f0f0f0]">
          <IconButton label="Scroll up" className="h-[17px]"><Chevron d={UP} /></IconButton>
          <div className="flex flex-1 flex-col justify-center"><div className="h-[17px] bg-[#cdcdcd]" /></div>
          <IconButton label="Scroll down" className="h-[17px]"><Chevron d={DOWN} /></IconButton>
        </div>
      </div>
      <div className="flex h-[19px] shrink-0 items-center pr-0.5">
        <span className="w-[75px] pl-[26px] whitespace-nowrap">1 : 20</span>
        {viewTools.map((t) => <IconButton key={t.label} label={t.label} className="h-4 w-[21px]">{t.art}</IconButton>)}
        <IconButton label="Scroll left" className="w-4"><Chevron d={LEFT} /></IconButton>
        <div className="flex h-[17px] flex-1 justify-center"><div className="w-[17px] bg-[#cdcdcd]" /></div>
        <IconButton label="Scroll right" className="mr-1 w-4"><Chevron d={RIGHT} /></IconButton>
        <svg aria-hidden="true" width="9" height="9" viewBox="0 0 9 9" fill="#b5b5b5"><path d="M6 0h2v2H6zM6 3h2v2H6zM3 3h2v2H3zM6 6h2v2H6zM3 6h2v2H3zM0 6h2v2H0z" /></svg>
      </div>
    </main>
  );
}

/* ---------- dialog ---------- */

function AssociateDialog() {
  return (
    <div role="dialog" aria-labelledby="dlg-title" className="absolute top-[312px] left-[384px] flex w-[355px] flex-col border border-[#cfcfcf] bg-[#ebebeb] px-1.5 pb-1.5 font-['DejaVu_Sans_Condensed','DejaVu_Sans',sans-serif] text-[11px] leading-[13px] text-black">
      <div className="grid h-[29px] grid-cols-[31px_1fr_31px] items-start">
        <span />
        <h1 id="dlg-title" className="pt-1 text-center font-['Open_Sans',sans-serif] text-sm leading-[22px] whitespace-nowrap text-[#333]">Associate Family Parameter</h1>
        <IconButton label="Close" className="h-5 bg-[#bcbcbc]">
          <svg aria-hidden="true" width="9" height="9" viewBox="0 0 9 9" stroke="#fff" strokeWidth="1.500"><path d="M1 1l7 7M8 1L1 8" /></svg>
        </IconButton>
      </div>
      <div className="flex flex-col border border-[#dadada] bg-[#f0f0f0] px-2.5 pt-[13px] pb-3">
        <dl className="grid grid-cols-[123px_1fr] gap-y-[9px]">
          <dt>Family parameter:</dt>
          <dd>Flow</dd>
          <dt>Parameter type:</dt>
          <dd>Air Flow</dd>
        </dl>
        <p id="dlg-list" className="mt-4 whitespace-nowrap">Existing family parameters of compatible type:</p>
        <ul role="listbox" aria-labelledby="dlg-list" className="mt-[7px] ml-px h-[185px] border border-[#828790] bg-white px-px pt-0.5">
          <li role="option" aria-selected="false" className="px-[3px]">&lt;none&gt;</li>
          <li role="option" aria-selected="true" className="bg-[#3399ff] px-0.5 text-white">Air Flow</li>
        </ul>
        <button type="button" className="mt-2 ml-0.5 h-[22px] w-[124px] border border-[#acacac] bg-linear-to-b from-[#f0f0f0] to-[#e6e6e6]">Add parameter...</button>
        <div className="mt-[9px] mr-px flex justify-end gap-2">
          <button type="button" className="h-[22px] w-[88px] border border-[#3399ff] bg-linear-to-b from-[#f0f0f0] to-[#e6e6e6]">OK</button>
          <button type="button" className="h-[22px] w-[88px] border border-[#acacac] bg-linear-to-b from-[#f0f0f0] to-[#e6e6e6]">Cancel</button>
        </div>
      </div>
    </div>
  );
}

/* ---------- red call-outs ---------- */

function Callouts() {
  return (
    <svg aria-hidden="true" className="pointer-events-none absolute inset-0 h-full w-full">
      <g className="drop-shadow-[2px_2px_1px_rgba(0,0,0,0.7)]" fill="#f00" stroke="none">
        <g fill="none" stroke="#f00" strokeWidth="4">
          <path d="M150 285.500H341V318H150z" />
          <path d="M322 397.500H364V425.500H322z" />
          <path d="M1102 511.500H1269V730H1102z" />
        </g>
        <path d="M282 325.500A4.800 4.800 0 00274 331L306 377.500 303.500 381 323 391 322 370 314 371.500z" />
        <path d="M369 424L365 431 385 443 383 447 404 447.500 393 429 391 433z" />
        <path d="M343 305L358 298 357.500 305.500 1084.500 502.500A5 5 0 011081.500 512.300L355 312 353 318z" />
      </g>
    </svg>
  );
}

export default function App() {
  return (
    <div className="relative flex h-screen flex-col overflow-hidden bg-[#f0f0f0] font-['Open_Sans',sans-serif] text-xs text-black">
      <Ribbon />
      <div className="flex h-7 shrink-0 items-center border-t border-[#5cb531] bg-[#d8e3d0] pt-1.5 pb-1 pl-1 text-[11px] text-[#a0a5a0]">Modify | Connector Element</div>
      <div className="flex min-h-0 flex-1">
        <aside className="flex w-[357px] shrink-0 flex-col">
          <PropertiesPalette />
          <ProjectBrowser />
        </aside>
        <ModelView />
      </div>
      <AssociateDialog />
      <Callouts />
    </div>
  );
}
